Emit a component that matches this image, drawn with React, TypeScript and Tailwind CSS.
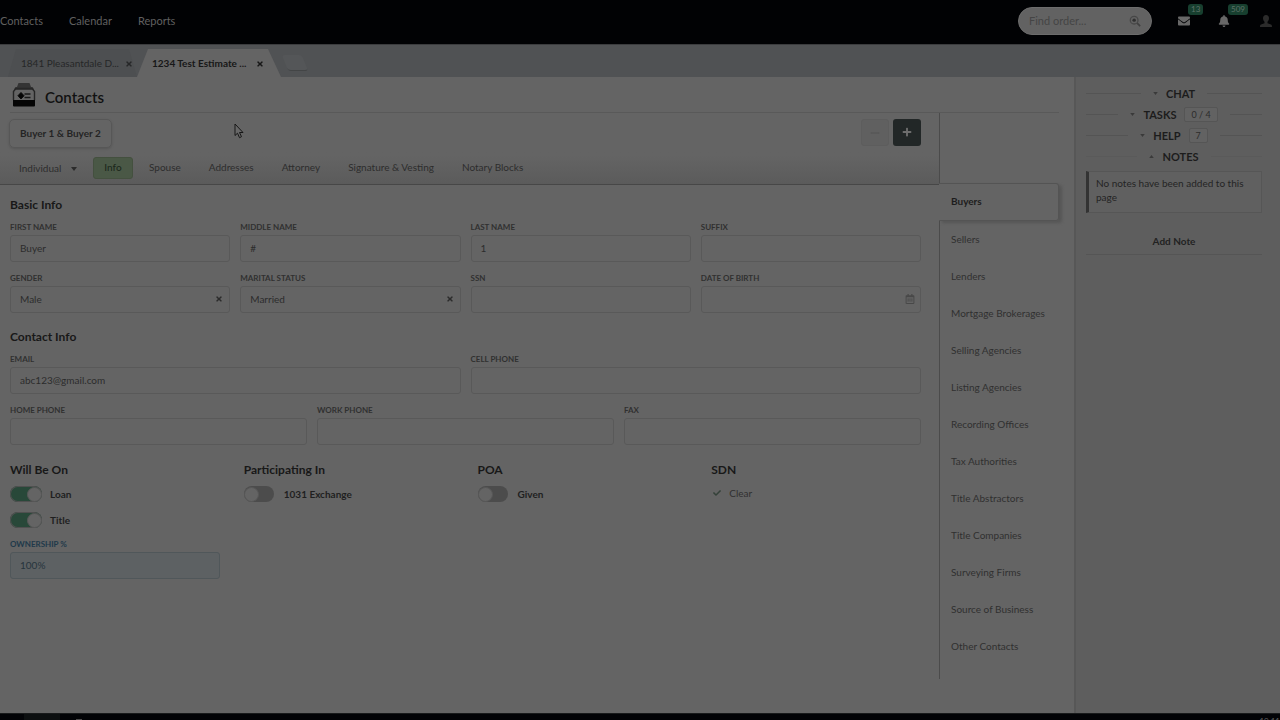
import { useState } from 'react';
import type { ReactNode } from 'react';
import { FaBell, FaCheck, FaEnvelope, FaMinus, FaPlus, FaRegCalendarAlt, FaTimes } from 'react-icons/fa';

const inputClass =
  'h-[27px] w-full min-w-0 appearance-none rounded-[3px] border border-[#595959] bg-transparent px-[9px] pb-0.5 text-[10px] text-[#2c2c2c] outline-none';

function Label({ id, children }: { id: string; children: ReactNode }) {
  return (
    <label htmlFor={id} className="mb-0.5 block text-[8px] leading-3 font-bold text-[#303030] uppercase">
      {children}
    </label>
  );
}

function Field({ id, label, value = '', calendar = false }: { id: string; label: string; value?: string; calendar?: boolean }) {
  return (
    <div className="min-w-0">
      <Label id={id}>{label}</Label>
      <div className="relative">
        <input id={id} type="text" defaultValue={value} className={inputClass} />
        {calendar && <FaRegCalendarAlt className="absolute top-2 right-1.5 size-2.5 text-[#484848]" />}
      </div>
    </div>
  );
}

function Choice({ id, label, value }: { id: string; label: string; value: string }) {
  return (
    <div className="min-w-0">
      <Label id={id}>{label}</Label>
      <div className="relative">
        <select id={id} defaultValue={value} className={inputClass}>
          <option>{value}</option>
        </select>
        <button type="button" aria-label={`Clear ${label}`} className="absolute top-[9px] right-[7px]">
          <FaTimes className="size-2 text-[#2b2b2b]" />
        </button>
      </div>
    </div>
  );
}

function Toggle({ label, on = false }: { label: string; on?: boolean }) {
  const [checked, setChecked] = useState(on);
  return (
    <label className="flex h-5 items-center font-bold text-[#1f1f1f]">
      <input type="checkbox" className="peer sr-only" checked={checked} onChange={() => setChecked(!checked)} />
      <span
        className={
          checked
            ? 'mr-2 flex h-4 w-8 items-center justify-end rounded-full bg-[#284839] ring-1 ring-[#505050] ring-inset'
            : 'mr-2.5 flex h-4 w-[30px] items-center rounded-full bg-[#4c4c4c]'
        }
      >
        <span className="size-[15px] rounded-full border border-[#575757] bg-[#646464]" />
      </span>
      {label}
    </label>
  );
}

function Heading({ children }: { children: ReactNode }) {
  return <h2 className="text-[12px] leading-5 font-bold text-[#181818]">{children}</h2>;
}

function PanelRow({ label, badge, up = false, line = true }: { label: string; badge?: string; up?: boolean; line?: boolean }) {
  const rule = line ? 'h-px flex-1 bg-[#545454]' : 'h-px flex-1 bg-[#5a5a5a]';
  return (
    <button type="button" className="flex h-[21px] w-full items-center gap-3 text-[11px] leading-4 font-bold text-[#1c1c1c]">
      <span className={rule} />
      <span className="flex items-center gap-2">
        <svg viewBox="0 0 6 4" className="h-[3px] w-[5px]" fill="#3a3a3a">
          <path d={up ? 'M0 4h6L3 0z' : 'M0 0h6L3 4z'} />
        </svg>
        <span>{label}</span>
        {badge && (
          <span className="rounded-[2px] border border-[#555555] bg-[#626262] px-1.5 text-[9px] leading-[13px] font-normal text-[#2c2c2c]">
            {badge}
          </span>
        )}
      </span>
      <span className={rule} />
    </button>
  );
}

const subTabs = ['Info', 'Spouse', 'Addresses', 'Attorney', 'Signature & Vesting', 'Notary Blocks'];

const groups = [
  'Buyers', 'Sellers', 'Lenders', 'Mortgage Brokerages', 'Selling Agencies', 'Listing Agencies', 'Recording Offices',
  'Tax Authorities', 'Title Abstractors', 'Title Companies', 'Surveying Firms', 'Source of Business', 'Other Contacts',
];

function ContactsIcon() {
  return (
    <svg viewBox="0 0 24 24" className="size-6">
      <path d="M6.500 0h11l1.500 4H5z" fill="#343434" />
      <path d="M3.500 4h17l1.500 2.500H2z" fill="#303030" />
      <path d="M1.500 17V8.500L3.500 6h17l2 2.500V17" fill="#646464" stroke="#252525" strokeWidth="1.400" />
      <path d="M9 9.500l3 3.200-3 3.200-3-3.200z" fill="#050505" stroke="#050505" strokeWidth="1" strokeLinejoin="round" />
      <path d="M12.500 11h6M12.500 14.500h6" stroke="#1a1a1a" strokeWidth="1.500" />
      <path d="M1 17h22v5.500q0 1-1 1H2q-1 0-1-1z" fill="#050505" />
    </svg>
  );
}

function Header() {
  return (
    <header className="flex h-11 shrink-0 items-center justify-between bg-[#010204] pb-[3px] text-[11px] text-[#606060]">
      <nav className="flex gap-[26px]">
        <a href="#contacts">Contacts</a>
        <a href="#calendar">Calendar</a>
        <a href="#reports">Reports</a>
      </nav>
      <div className="flex items-center pr-2">
        <div className="mr-[26px] flex h-7 w-[134px] items-center rounded-full border border-[#6c6c6c] bg-[#626262] px-2.5">
          <input
            type="search"
            aria-label="Find order"
            placeholder="Find order..."
            className="min-w-0 flex-1 bg-transparent text-[11px] outline-none placeholder:text-[#454545]"
          />
          <svg viewBox="0 0 14 14" className="size-3" fill="none">
            <circle cx="6" cy="6" r="4.500" stroke="#474747" strokeWidth="1.500" />
            <circle cx="6" cy="6" r="2" fill="#303030" />
            <path d="M9.500 9.500l3.500 3.500" stroke="#404040" strokeWidth="2" />
          </svg>
        </div>
        <button type="button" aria-label="Messages" className="relative mr-7">
          <FaEnvelope className="size-3 text-[#686868]" />
          <span className="absolute -top-[11px] left-2.5 rounded-[3px] bg-[#173f2f] px-[3px] text-[8px] leading-[11px] text-[#5d7067]">13</span>
        </button>
        <button type="button" aria-label="Notifications" className="relative mr-[30px]">
          <FaBell className="size-3 text-[#686868]" />
          <span className="absolute -top-[11px] left-2.5 rounded-[3px] bg-[#173f2f] px-[3px] text-[8px] leading-[11px] text-[#5d7067]">509</span>
        </button>
        <button type="button" aria-label="Account">
          <svg viewBox="0 0 12 12" className="size-3" fill="#2b2b2b">
            <path d="M6 0c2 0 3 1.400 3 3.200C9 5 8 6 7.500 6.800v1.400L11 9.600c.7.300 1 .8 1 2.400H0c0-1.600.3-2.100 1-2.400l3.500-1.400V6.800C4 6 3 5 3 3.200 3 1.400 4 0 6 0z" />
          </svg>
        </button>
      </div>
    </header>
  );
}

function OrderTabs() {
  return (
    <div className="flex h-[33px] shrink-0 items-end border-t border-[#3b3c3e] bg-[#505254] pl-2">
      <div className="flex h-7 w-[129px] items-center gap-1.5 bg-[#4d4f51] pl-[13px] text-[#262728] [clip-path:polygon(8px_0,calc(100%-8px)_0,100%_100%,0_100%)]">
        <a href="#order-1841" className="whitespace-nowrap">1841 Pleasantdale D...</a>
        <button type="button" aria-label="Close 1841 Pleasantdale" className="pt-0.5">
          <FaTimes className="size-2" />
        </button>
      </div>
      <div className="flex h-7 w-36 items-center gap-2.5 bg-[#646464] pl-[15px] font-bold text-[#171717] [clip-path:polygon(11px_0,calc(100%-13px)_0,100%_100%,0_100%)]">
        <a href="#order-1234" className="whitespace-nowrap">1234 Test Estimate ...</a>
        <button type="button" aria-label="Close 1234 Test Estimate" className="pt-0.5">
          <FaTimes className="size-2" />
        </button>
      </div>
      <button
        type="button"
        aria-label="New order tab"
        className="mb-1.5 ml-1 h-4 w-5 skew-x-[22deg] rounded-[3px] border-b border-[#434546] bg-[#545658]"
      />
    </div>
  );
}

export default function App() {
  return (
    <div className="relative flex min-h-screen flex-col overflow-hidden bg-[#646464] font-['Lato',sans-serif] text-[10px] leading-4 text-[#303030]">
      <Header />
      <OrderTabs />
      <div className="flex flex-1">
        <main className="flex min-w-0 flex-1 flex-col pr-[15px]">
          <div className="ml-2.5 flex h-9 items-center gap-2 border-b border-[#595959] pl-0.5">
            <ContactsIcon />
            <h1 className="pt-1 pl-px text-[15px] font-semibold text-[#111111]">Contacts</h1>
          </div>
          <div className="flex">
            <section className="min-w-0 flex-1">
              <div className="h-[72px] border-b border-[#474747] bg-linear-to-b from-[#646464] from-60% to-[#5b5b5b]">
                <div className="flex items-start justify-between pt-1.5 pr-[18px] pl-[9px]">
                  <button type="button" className="h-[29px] rounded-[5px] border border-[#575757] px-2.5 pb-0.5 font-bold text-[#242424] shadow-sm">
                    Buyer 1 &amp; Buyer 2
                  </button>
                  <div className="flex gap-1">
                    <button type="button" aria-label="Remove contact" className="flex h-[27px] w-7 items-center justify-center rounded-[3px] border border-[#5d5d5d] bg-[#606060]">
                      <FaMinus className="size-2.5 text-[#595959]" />
                    </button>
                    <button type="button" aria-label="Add contact" className="flex h-[27px] w-7 items-center justify-center rounded-[3px] bg-[#222727] pb-0.5">
                      <FaPlus className="size-2.5 text-[#6e6e6e]" />
                    </button>
                  </div>
                </div>
                <nav className="flex items-center pt-[9px] text-[#2d2d2d]">
                  <div className="relative mr-1.5 ml-[19px] w-[68px]">
                    <select aria-label="Contact type" defaultValue="Individual" className="block w-full appearance-none bg-transparent outline-none">
                      <option>Individual</option>
                      <option>Entity</option>
                    </select>
                    <svg viewBox="0 0 6 4" className="pointer-events-none absolute top-[7px] right-2.5 h-1 w-1.5" fill="#2b2b2b">
                      <path d="M0 0h6L3 4z" />
                    </svg>
                  </div>
                  {subTabs.map((tab) => (
                    <button
                      key={tab}
                      type="button"
                      className={
                        tab === 'Info'
                          ? 'mr-0.5 h-[22px] w-10 rounded-[3px] border border-[#44503f] bg-[#4a5846] pb-0.5 font-medium text-[#1c281c]'
                          : 'h-[22px] px-3.5 pb-0.5 whitespace-nowrap'
                      }
                    >
                      {tab}
                    </button>
                  ))}
                </nav>
              </div>
              <form className="pt-2.5 pr-[18px] pb-5 pl-2.5">
                <Heading>Basic Info</Heading>
                <div className="mt-1.5 grid grid-cols-4 gap-2.5">
                  <Field id="first" label="First Name" value="Buyer" />
                  <Field id="middle" label="Middle Name" value="#" />
                  <Field id="last" label="Last Name" value="1" />
                  <Field id="suffix" label="Suffix" />
                  <Choice id="gender" label="Gender" value="Male" />
                  <Choice id="marital" label="Marital Status" value="Married" />
                  <Field id="ssn" label="SSN" />
                  <Field id="dob" label="Date of Birth" calendar />
                </div>
                <div className="mt-3.5">
                  <Heading>Contact Info</Heading>
                </div>
                <div className="mt-1.5 grid grid-cols-2 gap-2.5">
                  <Field id="email" label="Email" value="abc123@gmail.com" />
                  <Field id="cell" label="Cell Phone" />
                </div>
                <div className="mt-2.5 grid grid-cols-3 gap-2.5">
                  <Field id="home" label="Home Phone" />
                  <Field id="work" label="Work Phone" />
                  <Field id="fax" label="Fax" />
                </div>
                <div className="mt-[15px] grid grid-cols-4 gap-6">
                  <div>
                    <Heading>Will Be On</Heading>
                    <div className="mt-1 mb-2 flex flex-col gap-1.5">
                      <Toggle label="Loan" on />
                      <Toggle label="Title" on />
                    </div>
                    <label htmlFor="ownership" className="mb-0.5 block text-[8px] leading-3 font-bold text-[#20394a]">
                      OWNERSHIP %
                    </label>
                    <input
                      id="ownership"
                      type="text"
                      defaultValue="100%"
                      className="h-[27px] w-full rounded-[3px] border border-[#50575a] bg-[#5d6163] px-[9px] pb-0.5 text-[10px] text-[#26343d] outline-none"
                    />
                  </div>
                  <div>
                    <Heading>Participating In</Heading>
                    <div className="mt-1">
                      <Toggle label="1031 Exchange" />
                    </div>
                  </div>
                  <div>
                    <Heading>POA</Heading>
                    <div className="mt-1">
                      <Toggle label="Given" />
                    </div>
                  </div>
                  <div>
                    <Heading>SDN</Heading>
                    <p className="mt-[3px] flex h-5 items-center gap-2 pl-0.5">
                      <FaCheck className="size-2 text-[#344139]" />
                      Clear
                    </p>
                  </div>
                </div>
              </form>
            </section>
            <aside className="flex w-[120px] flex-col">
              <div className="h-[70px] border-l border-[#4b4b4b]" />
              {groups.map((group) =>
                group === 'Buyers' ? (
                  <a
                    key={group}
                    href="#buyers"
                    className="flex h-[38px] items-center rounded-r-[3px] border-y border-r border-[#545454] pb-[3px] pl-3 font-bold text-[#1d1d1d] shadow-[3px_2px_3px_#565656]"
                  >
                    {group}
                  </a>
                ) : (
                  <a key={group} href={`#${group}`} className="flex h-[37px] items-center border-l border-[#4b4b4b] pb-0.5 pl-[11px] whitespace-nowrap">
                    {group}
                  </a>
                ),
              )}
              <div className="h-3.5 border-l border-[#4b4b4b]" />
            </aside>
          </div>
        </main>
        <aside className="w-[206px] border-l-2 border-[#575757] bg-[#5e5e5e] pt-1.5 pr-[18px] pl-2.5">
          <PanelRow label="CHAT" />
          <PanelRow label="TASKS" badge="0 / 4" />
          <PanelRow label="HELP" badge="7" />
          <PanelRow label="NOTES" up line={false} />
          <p className="mt-1 h-[42px] border border-l-3 border-[#565656] border-l-[#333333] bg-[#606060] py-1 pr-3 pl-[7px] leading-[14px] text-[#242424]">
            No notes have been added to this page
          </p>
          <button type="button" className="mt-3.5 h-7 w-full border-b border-[#555555] font-bold text-[#222222]">
            Add Note
          </button>
        </aside>
      </div>
      <footer className="flex h-[7px] shrink-0 items-start overflow-hidden border-t border-[#181a1b] bg-[#020306] pl-6">
        <span className="h-1.5 w-9 bg-[#0c0f10]" />
        <span className="mt-[5px] ml-4 h-px w-1.5 bg-[#4a4a4a]" />
        <span className="mt-[3px] ml-auto text-[8px] leading-[8px] text-[#606060]">10:11</span>
      </footer>
      <svg viewBox="0 0 10 16" className="pointer-events-none absolute top-[123px] left-[234px] h-4 w-2.5" fill="#686868" stroke="#161616">
        <path d="M1 1v11.500l2.500-2.300 2 4.500 2-1-2-4.200H9z" />
      </svg>
    </div>
  );
}
